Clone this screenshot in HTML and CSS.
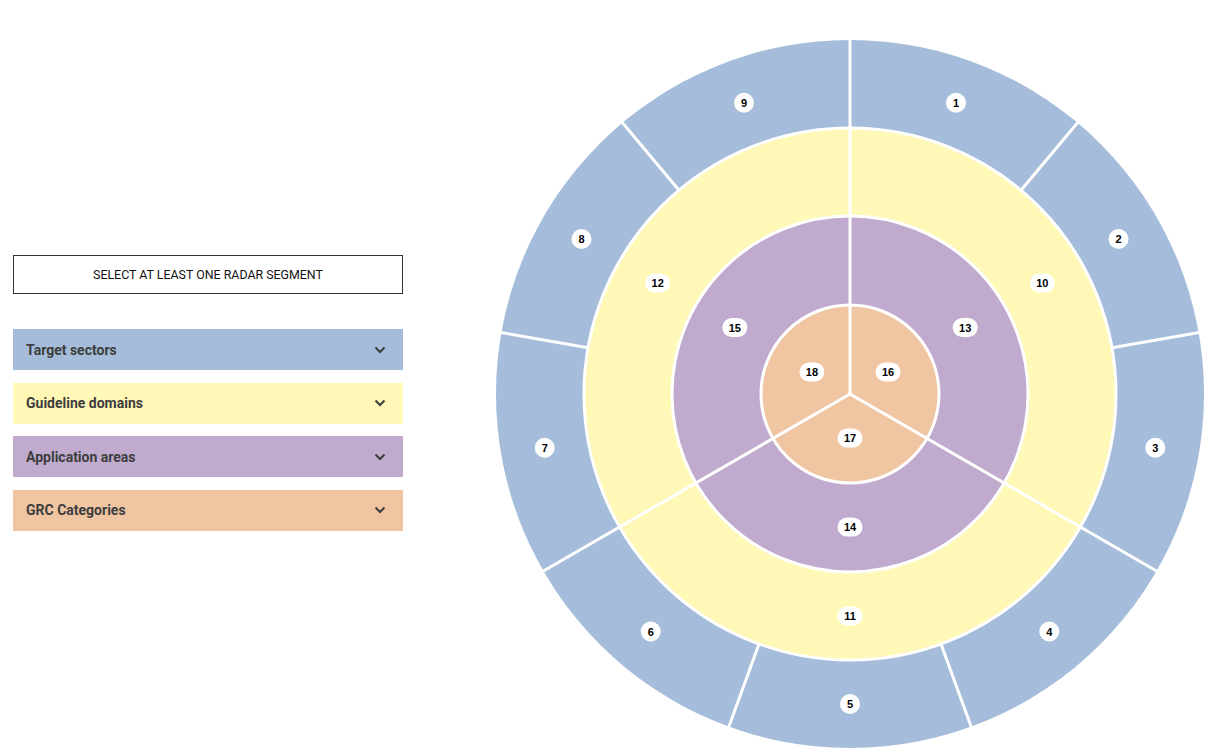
FILE: index.html
```html
<!DOCTYPE html>
<html>
<head>
	<title>Radar</title>
	<meta http-equiv="content-type" content="text/html; charset=utf-8" />
	<link rel="stylesheet" href="styles.css">
</head>
<body>
	<div class="page">
		<div class="panel">
			<button class="select">SELECT AT LEAST ONE RADAR SEGMENT</button>

			<div class="group blue">
				<span>Target sectors</span>
				<svg class="chev" width="12" height="8" viewBox="0 0 12 8"><polyline points="1.5,1.5 6,6 10.5,1.5"/></svg>
			</div>
			<div class="group yellow">
				<span>Guideline domains</span>
				<svg class="chev" width="12" height="8" viewBox="0 0 12 8"><polyline points="1.5,1.5 6,6 10.5,1.5"/></svg>
			</div>
			<div class="group purple">
				<span>Application areas</span>
				<svg class="chev" width="12" height="8" viewBox="0 0 12 8"><polyline points="1.5,1.5 6,6 10.5,1.5"/></svg>
			</div>
			<div class="group orange">
				<span>GRC Categories</span>
				<svg class="chev" width="12" height="8" viewBox="0 0 12 8"><polyline points="1.5,1.5 6,6 10.5,1.5"/></svg>
			</div>
		</div>

		<svg class="radar" width="720" height="720" viewBox="-360 -360 720 720">
			<circle r="354" fill="#a5bddb"/>
			<circle r="266" fill="#fff8b6" class="ring"/>
			<circle r="178" fill="#c0abcf" class="ring"/>
			<circle r="89" fill="#f0c5a1" class="ring"/>

			<g class="div">
				<line x1="0" y1="0" x2="0" y2="-356"/>
				<line x1="0" y1="0" x2="308.3" y2="178"/>
				<line x1="0" y1="0" x2="-308.3" y2="178"/>
				<line x1="171" y1="-203.8" x2="228.8" y2="-272.7"/>
				<line x1="262" y1="-46.2" x2="350.6" y2="-61.8"/>
				<line x1="91" y1="250" x2="121.8" y2="334.5"/>
				<line x1="-91" y1="250" x2="-121.8" y2="334.5"/>
				<line x1="-262" y1="-46.2" x2="-350.6" y2="-61.8"/>
				<line x1="-171" y1="-203.8" x2="-228.8" y2="-272.7"/>
			</g>

			<g class="lbl">
				<g transform="translate(106,-291.3)"><circle r="10"/><text y="4">1</text></g>
				<g transform="translate(268.5,-155)"><circle r="10"/><text y="4">2</text></g>
				<g transform="translate(305.3,53.8)"><circle r="10"/><text y="4">3</text></g>
				<g transform="translate(199.3,237.5)"><circle r="10"/><text y="4">4</text></g>
				<g transform="translate(0,310)"><circle r="10"/><text y="4">5</text></g>
				<g transform="translate(-199.3,237.5)"><circle r="10"/><text y="4">6</text></g>
				<g transform="translate(-305.3,53.8)"><circle r="10"/><text y="4">7</text></g>
				<g transform="translate(-268.5,-155)"><circle r="10"/><text y="4">8</text></g>
				<g transform="translate(-106,-291.3)"><circle r="10"/><text y="4">9</text></g>

				<g transform="translate(192.3,-111)"><rect x="-12.5" y="-9.5" width="25" height="19" rx="9.5"/><text y="4">10</text></g>
				<g transform="translate(0,222)"><rect x="-12.5" y="-9.5" width="25" height="19" rx="9.5"/><text y="4">11</text></g>
				<g transform="translate(-192.3,-111)"><rect x="-12.5" y="-9.5" width="25" height="19" rx="9.5"/><text y="4">12</text></g>

				<g transform="translate(115.2,-66.5)"><rect x="-12.5" y="-9.5" width="25" height="19" rx="9.5"/><text y="4">13</text></g>
				<g transform="translate(0,133)"><rect x="-12.5" y="-9.5" width="25" height="19" rx="9.5"/><text y="4">14</text></g>
				<g transform="translate(-115.2,-66.5)"><rect x="-12.5" y="-9.5" width="25" height="19" rx="9.5"/><text y="4">15</text></g>

				<g transform="translate(38.1,-22)"><rect x="-12.5" y="-9.5" width="25" height="19" rx="9.5"/><text y="4">16</text></g>
				<g transform="translate(0,44)"><rect x="-12.5" y="-9.5" width="25" height="19" rx="9.5"/><text y="4">17</text></g>
				<g transform="translate(-38.1,-22)"><rect x="-12.5" y="-9.5" width="25" height="19" rx="9.5"/><text y="4">18</text></g>
			</g>
		</svg>
	</div>
</body>
</html>
```

FILE: styles.css
```css
body {
	margin:0;
	background:#fff;
	font-family:Roboto, "Liberation Sans", sans-serif;
}

.page {
	display:flex;
	align-items:flex-start;
	width:1215px;
	height:753px;
	overflow:hidden;
}

.panel {
	width:390px;
	margin:255px 0 0 13px;
	display:flex;
	flex-direction:column;
	gap:12.5px;
}

.select {
	height:39px;
	margin-bottom:22.5px;
	background:#fff;
	border:1px solid #333;
	font-family:Roboto, "Liberation Sans", sans-serif;
	font-size:12.4px;
	color:#111;
	padding:0;
}

.group {
	height:41px;
	padding:0 17px 0 13px;
	display:flex;
	align-items:center;
	justify-content:space-between;
	font-size:14px;
	font-weight:bold;
	color:#3d3d3d;
}

.chev polyline {
	fill:none;
	stroke:#3d3d3d;
	stroke-width:2;
}

.blue { background:#a5bddb; }
.yellow { background:#fff8b6; }
.purple { background:#c0abcf; }
.orange { background:#f0c5a1; }

.radar {
	margin:34px 0 0 87px;
	flex:none;
}

.ring {
	stroke:#fff;
	stroke-width:3;
}

.div line {
	stroke:#fff;
	stroke-width:3;
}

.lbl circle, .lbl rect {
	fill:#fff;
}

.lbl text {
	font-family:"Liberation Sans", Arial, sans-serif;
	font-size:11px;
	font-weight:bold;
	text-anchor:middle;
	fill:#000;
}
```
